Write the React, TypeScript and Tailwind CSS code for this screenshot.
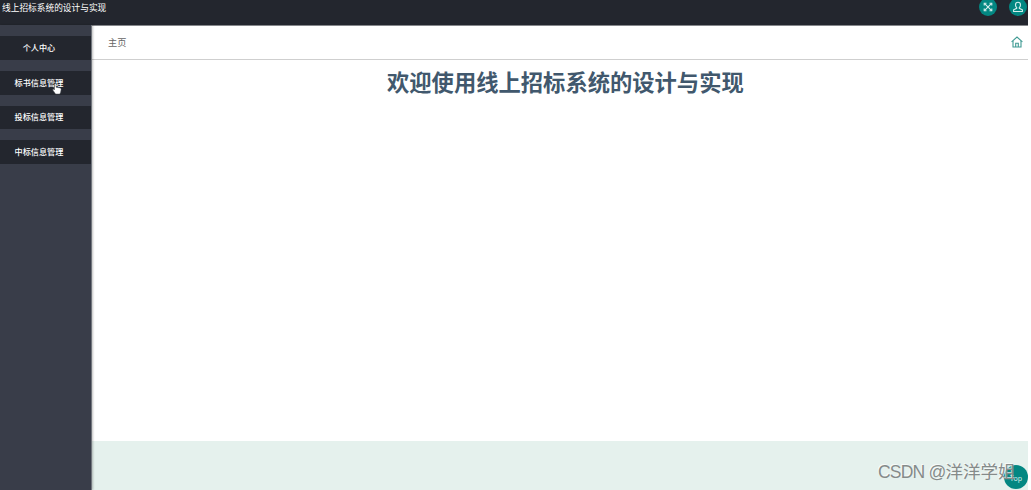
import { useState } from "react";

const menuItems = ["个人中心", "标书信息管理", "投标信息管理", "中标信息管理"];

function ExpandIcon() {
  return (
    <svg width="10" height="10" viewBox="0 0 12 12" fill="none" stroke="#d5efed" strokeWidth="1.400">
      <path d="M2 2l8 8M10 2l-8 8" />
      <path d="M1.500 4.200V1.500h2.700M7.800 1.500h2.700v2.700M10.500 7.800v2.700H7.800M4.200 10.500H1.500V7.800" />
    </svg>
  );
}

function UserIcon() {
  return (
    <svg width="12" height="12" viewBox="0 0 12 12" fill="none" stroke="#d5efed" strokeWidth="1.100">
      <path d="M6 1.300c-1.600 0-2.500 1.100-2.500 2.600 0 1.200.5 2 1.200 2.600v.8L1.600 8.800v1.700h8.800V8.800L7.300 7.300v-.8c.7-.6 1.200-1.400 1.200-2.600 0-1.500-.9-2.600-2.500-2.600z" />
    </svg>
  );
}

function HomeIcon() {
  return (
    <svg width="12" height="12" viewBox="0 0 12 12" fill="none" stroke="#3f9a93" strokeWidth="1.100">
      <path d="M.6 5.800L6 1l5.400 4.800" />
      <path d="M2 5v6h8V5M4.700 11V7.200h2.600V11" />
    </svg>
  );
}

function HandCursor() {
  return (
    <svg className="absolute left-[52px] top-[12px]" width="10" height="12" viewBox="0 0 10 12">
      <path
        d="M2.500 1.200c0-1 1.500-1 1.500 0v3l4 .7c.9.200 1.200.7 1.100 1.500L8.600 9.200 7.800 11H3.600L1 7.300c-.6-.9.300-1.500 1-.9l.5.500z"
        fill="#fff"
        stroke="#55585f"
        strokeWidth="0.500"
      />
    </svg>
  );
}

export default function App() {
  const [active, setActive] = useState("标书信息管理");

  return (
    <div className="h-[490px] w-[1031px] overflow-hidden bg-white font-['Noto_Sans_CJK_SC','Liberation_Sans',sans-serif]">
      <div className="relative flex h-full w-[1028px] flex-col overflow-hidden">
        {/* Top bar */}
        <header className="flex h-[25px] shrink-0 items-start justify-between bg-[#23262e] pl-[2px] text-white">
          <h1 className="pt-[2px] text-[8.700px] leading-[12px]">线上招标系统的设计与实现</h1>
          <div className="-mt-[2px] flex gap-3">
            <button className="flex size-[18px] items-center justify-center rounded-full bg-[#038782]">
              <ExpandIcon />
            </button>
            <button className="mr-[1px] flex size-[18px] items-center justify-center rounded-full bg-[#038782]">
              <UserIcon />
            </button>
          </div>
        </header>

        <div className="flex min-h-0 flex-1">
          {/* Sidebar */}
          <aside className="z-10 flex w-[92px] shrink-0 flex-col gap-[11px] border-r border-[#71767d] bg-[#393d49] pt-[11px] shadow-[1px_0_2px_rgba(0,0,0,0.25)]">
            {menuItems.map((item) => (
              <button
                key={item}
                onClick={() => setActive(item)}
                className="relative flex h-[23.800px] w-full items-center bg-[#23262e] text-[8.150px] leading-none font-medium text-white"
              >
                <span className="w-[78px] text-center">{item}</span>
                {item === active && <HandCursor />}
              </button>
            ))}
          </aside>

          {/* Content */}
          <div className="flex min-w-0 flex-1 flex-col">
            <nav className="flex h-[35px] shrink-0 items-center justify-between border-t border-b border-t-[#85878b] border-b-[#cfcfcf] pr-[5px] pl-4 text-[9.200px] text-[#666]">
              <span>主页</span>
              <span className="pb-[2px]">
                <HomeIcon />
              </span>
            </nav>
            <main className="flex-1 pt-[5px]">
              <h2 className="pl-[295px] text-[22.300px] leading-[32px] font-bold whitespace-nowrap text-[#41586d]">
                欢迎使用线上招标系统的设计与实现
              </h2>
            </main>
            <footer className="h-[49px] shrink-0 bg-[#e5f1ed]" />
          </div>
        </div>

        <button className="absolute top-[465px] right-0 z-20 size-[24px] rounded-full bg-[#038782] pt-[2px] text-[7px] leading-none text-[#d9efed]">
          Top
        </button>
        {/* Watermark */}
        <div className="absolute top-[461px] left-[878px] z-30 font-['Liberation_Sans','Noto_Sans_CJK_SC',sans-serif] text-[17.500px] leading-[22px] whitespace-nowrap text-[#858b8a] [text-shadow:-1px_-1px_0_rgba(255,255,255,0.7)]">
          <span className="tracking-[-0.8px]">CSDN @</span>洋洋学姐
        </div>
      </div>
    </div>
  );
}
